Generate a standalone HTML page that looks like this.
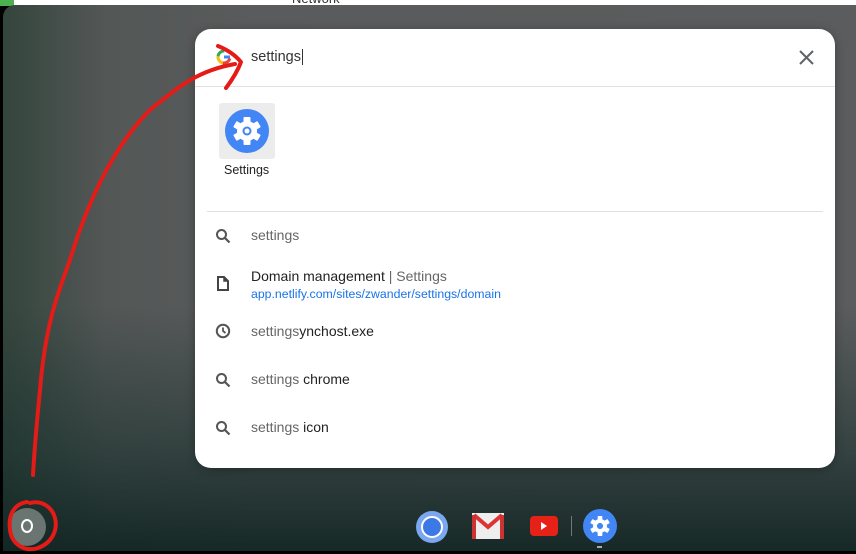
<!DOCTYPE html>
<html><head><style>
*{margin:0;padding:0;box-sizing:border-box}
body{width:856px;height:554px;overflow:hidden;position:relative;font-family:"Liberation Sans",Arial,sans-serif;background:#000}
#top{position:absolute;left:0;top:0;width:856px;height:6px;background:#fff;overflow:hidden}
#top span{position:absolute;left:292px;top:-9px;font-size:13px;color:#333}
#bg{position:absolute;left:3px;top:5px;width:853px;height:546px;border-radius:12px 0 0 0;
background:linear-gradient(to bottom,rgba(0,0,0,0) 55%,rgba(20,45,42,.55) 82%,rgba(15,35,33,.9) 100%),linear-gradient(to right,#34453d 0%,#535756 12%,#5a5b5c 30%,#5b5c5d 100%)}
#panel{position:absolute;left:195px;top:29px;width:640px;height:439px;background:#fff;border-radius:16px;box-shadow:0 2px 10px rgba(0,0,0,.3)}
.q{position:absolute;left:56px;top:20px;font-size:14.5px;color:#333}
.line{position:absolute;left:0;top:57px;width:640px;height:1px;background:#e0e0e0}
.line2{position:absolute;left:12px;top:182px;width:616px;height:1px;background:#e0e0e0}
.tile{position:absolute;left:24px;top:74px;width:56px;height:56px;background:#ececec;border-radius:3px}
.tl{position:absolute;left:29px;top:134px;font-size:12.5px;color:#222}
.row{position:absolute;left:56px;font-size:14px;color:#666}
.row b{font-weight:normal;color:#222}
.ic{position:absolute;left:20px}
.url{color:#1a73e8;font-size:12.3px}
</style></head><body>
<div id="top"><span>Network</span></div>
<div style="position:absolute;left:0;top:0;width:14px;height:6px;background:#4caf50"></div>
<div id="bg"></div>
<div id="panel">
 <svg style="position:absolute;left:20px;top:19px" width="18" height="18" viewBox="0 0 24 24"><circle cx="12" cy="12" r="8" fill="none" stroke="#fbbc05" stroke-width="4" stroke-dasharray="12 50" stroke-dashoffset="-14"/><circle cx="12" cy="12" r="8" fill="none" stroke="#34a853" stroke-width="4" stroke-dasharray="12 50" stroke-dashoffset="-26"/><circle cx="12" cy="12" r="8" fill="none" stroke="#ea4335" stroke-width="4" stroke-dasharray="12 50" stroke-dashoffset="-2"/><path d="M12 10h8v4h-8z" fill="#4285f4"/></svg>
 <div class="q">settings<span style="border-left:1px solid #333;margin-left:1px"></span></div>
 <svg style="position:absolute;left:604px;top:21px" width="15" height="15" viewBox="0 0 15 15"><path d="M1 1L14 14M14 1L1 14" stroke="#5f6368" stroke-width="2"/></svg>
 <div class="line"></div>
 <div class="tile"></div>
 <svg style="position:absolute;left:30px;top:80px" width="44" height="44" viewBox="0 0 44 44"><circle cx="22" cy="22" r="22" fill="#4285f4"/><g transform="translate(22 22)" fill="#fff"><circle r="10"/><rect x="-3.5" y="-14" width="7" height="7" rx="1"/><rect x="-3.5" y="-14" width="7" height="7" rx="1" transform="rotate(60)"/><rect x="-3.5" y="-14" width="7" height="7" rx="1" transform="rotate(120)"/><rect x="-3.5" y="-14" width="7" height="7" rx="1" transform="rotate(180)"/><rect x="-3.5" y="-14" width="7" height="7" rx="1" transform="rotate(240)"/><rect x="-3.5" y="-14" width="7" height="7" rx="1" transform="rotate(300)"/><circle r="4.5" fill="#4285f4"/><circle r="2.5" fill="#fff"/></g></svg>
 <div class="tl">Settings</div>
 <div class="line2"></div>
 <svg class="ic" style="top:199px" width="16" height="16" viewBox="0 0 16 16"><circle cx="6.5" cy="6.5" r="4.5" fill="none" stroke="#555" stroke-width="2"/><path d="M10 10l4.5 4.5" stroke="#555" stroke-width="2.2"/></svg>
 <div class="row" style="top:198px">settings</div>
 <svg class="ic" style="top:247px;left:22px" width="12" height="15" viewBox="0 0 12 15"><path d="M1 1h6l4 4v9H1z" fill="none" stroke="#444" stroke-width="2"/><path d="M7 1v4h4" fill="#444" stroke="#444" stroke-width="1.5"/></svg>
 <div class="row" style="top:239px"><b>Domain management</b> | Settings</div>
 <div class="row url" style="top:258px">app.netlify.com/sites/zwander/settings/domain</div>
 <svg class="ic" style="top:294px" width="16" height="16" viewBox="0 0 16 16"><circle cx="8" cy="8" r="6.2" fill="none" stroke="#555" stroke-width="2"/><path d="M8 4.5V8l2.5 2" fill="none" stroke="#555" stroke-width="1.8"/></svg>
 <div class="row" style="top:294px">settings<b>ynchost.exe</b></div>
 <svg class="ic" style="top:343px" width="16" height="16" viewBox="0 0 16 16"><circle cx="6.5" cy="6.5" r="4.5" fill="none" stroke="#555" stroke-width="2"/><path d="M10 10l4.5 4.5" stroke="#555" stroke-width="2.2"/></svg>
 <div class="row" style="top:342px">settings <b>chrome</b></div>
 <svg class="ic" style="top:391px" width="16" height="16" viewBox="0 0 16 16"><circle cx="6.5" cy="6.5" r="4.5" fill="none" stroke="#555" stroke-width="2"/><path d="M10 10l4.5 4.5" stroke="#555" stroke-width="2.2"/></svg>
 <div class="row" style="top:390px">settings <b>icon</b></div>
</div>
<div style="position:absolute;left:8px;top:508px;width:38px;height:38px;border-radius:50%;background:#6a7471"></div>
<div style="position:absolute;left:21px;top:519px;width:12px;height:14px;border:2px solid #fff;border-radius:50%"></div>
<svg style="position:absolute;left:414px;top:509px" width="36" height="36" viewBox="0 0 36 36"><circle cx="18" cy="18" r="16" fill="#7aa7f0"/><circle cx="18" cy="18" r="10" fill="#3d79e6" stroke="#fff" stroke-width="2"/></svg>
<svg style="position:absolute;left:472px;top:513px" width="32" height="26" viewBox="0 0 32 26"><rect width="32" height="26" fill="#eee"/><path d="M2 2L16 14L30 2" fill="none" stroke="#d33" stroke-width="4"/><path d="M2 2v24M30 2v24" stroke="#c33" stroke-width="4"/></svg>
<svg style="position:absolute;left:530px;top:516px" width="28" height="20" viewBox="0 0 28 20"><rect width="28" height="20" rx="4" fill="#e62117"/><path d="M11 6l6 4-6 4z" fill="#fff"/></svg>
<div style="position:absolute;left:571px;top:516px;width:1px;height:20px;background:#777"></div>
<svg style="position:absolute;left:583px;top:509px" width="34" height="34" viewBox="0 0 44 44"><circle cx="22" cy="22" r="22" fill="#4285f4"/><g transform="translate(22 22)" fill="#fff"><circle r="9"/><rect x="-3" y="-13" width="6" height="6" rx="1"/><rect x="-3" y="-13" width="6" height="6" rx="1" transform="rotate(60)"/><rect x="-3" y="-13" width="6" height="6" rx="1" transform="rotate(120)"/><rect x="-3" y="-13" width="6" height="6" rx="1" transform="rotate(180)"/><rect x="-3" y="-13" width="6" height="6" rx="1" transform="rotate(240)"/><rect x="-3" y="-13" width="6" height="6" rx="1" transform="rotate(300)"/><circle r="4" fill="#4285f4"/></g></svg>
<div style="position:absolute;left:597px;top:546px;width:5px;height:2px;background:#aaa"></div>
<div style="position:absolute;left:0;top:551px;width:856px;height:3px;background:#000"></div>
<svg style="position:absolute;left:0;top:0" width="856" height="554"><g fill="none" stroke="#e41b17" stroke-width="4" stroke-linecap="round" stroke-linejoin="round">
<path d="M33 475C35 440 38 410 40 390C45 330 55 300 70 260C85 210 110 150 150 110C180 85 200 70 235 64"/>
<path d="M218 46C228 50 236 56 241 62C238 70 232 80 226 88"/>
<path d="M27 502C14 504 8 515 10 530C12 545 25 552 38 548C52 543 58 530 55 518C52 507 42 500 30 503"/>
</g></svg>
</body></html>
